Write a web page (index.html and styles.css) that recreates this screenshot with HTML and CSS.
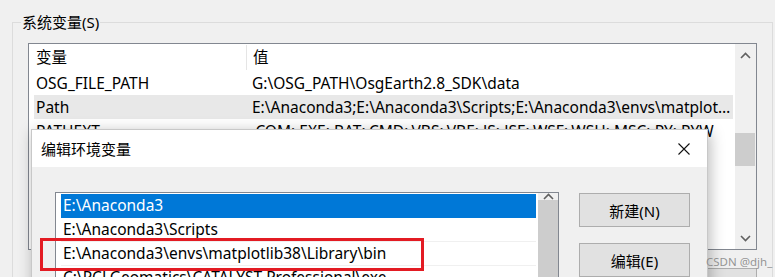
FILE: index.html
```html
<!DOCTYPE html>
<html lang="zh-CN">
<head>
  <meta charset="UTF-8" />
  <title>环境变量</title>
  <link rel="stylesheet" href="styles.css">
</head>
<body>
  <div class="window">
    <fieldset class="group">
      <legend>系统变量(S)</legend>
      <div class="listview">
        <div class="lv-body">
          <div class="lv-header">
            <div class="col col-name">变量</div>
            <div class="col col-value">值</div>
          </div>
          <div class="lv-row">
            <div class="col col-name">OSG_FILE_PATH</div>
            <div class="col col-value">G:\OSG_PATH\OsgEarth2.8_SDK\data</div>
          </div>
          <div class="lv-row hot">
            <div class="col col-name">Path</div>
            <div class="col col-value">E:\Anaconda3;E:\Anaconda3\Scripts;E:\Anaconda3\envs\matplotlib38;E:\Anaconda3\envs\matplotlib38\Library\bin</div>
          </div>
          <div class="lv-row">
            <div class="col col-name">PATHEXT</div>
            <div class="col col-value">.COM;.EXE;.BAT;.CMD;.VBS;.VBE;.JS;.JSE;.WSF;.WSH;.MSC;.PY;.PYW</div>
          </div>
          <div class="lv-row">
            <div class="col col-name">PROCESSOR_ARCHITECTURE</div>
            <div class="col col-value">AMD64</div>
          </div>
        </div>
        <div class="vscroll">
          <div class="arrow"><svg width="11" height="7" viewBox="0 0 11 7"><path d="M1 6 L5.5 1.5 L10 6" fill="none" stroke="#606060" stroke-width="1.6"/></svg></div>
          <div class="track"><div class="thumb outer-thumb"></div></div>
          <div class="arrow"><svg width="11" height="7" viewBox="0 0 11 7"><path d="M1 1 L5.5 5.5 L10 1" fill="none" stroke="#606060" stroke-width="1.6"/></svg></div>
        </div>
      </div>
      <div class="group-buttons">
        <button class="btn">删除(L)</button>
      </div>
    </fieldset>
  </div>

  <div class="dialog">
    <div class="titlebar">
      <span class="title">编辑环境变量</span>
      <span class="close">
        <svg width="12" height="12" viewBox="0 0 12 12"><path d="M0.5 0.5 L11.5 11.5 M11.5 0.5 L0.5 11.5" stroke="#111" stroke-width="1.1"/></svg>
      </span>
    </div>
    <div class="dialog-body">
      <div class="pathlist">
        <div class="pl-rows">
          <div class="pl-row selected">E:\Anaconda3</div>
          <div class="pl-row">E:\Anaconda3\Scripts</div>
          <div class="pl-row">E:\Anaconda3\envs\matplotlib38\Library\bin</div>
          <div class="pl-row">C:\PCLGeomatics\CATALYST Professional\exe</div>
        </div>
        <div class="vscroll small">
          <div class="arrow"><svg width="11" height="7" viewBox="0 0 11 7"><path d="M1 6 L5.5 1.5 L10 6" fill="none" stroke="#606060" stroke-width="1.6"/></svg></div>
          <div class="track"><div class="thumb inner-thumb"></div></div>
        </div>
      </div>
      <div class="side-buttons">
        <button class="btn">新建(N)</button>
        <button class="btn">编辑(E)</button>
      </div>
    </div>
    <div class="mark"></div>
  </div>

  <div class="watermark">CSDN @djh_</div>
</body>
</html>
```

FILE: styles.css
```css
body {
  margin: 0;
  width: 775px;
  height: 277px;
  overflow: hidden;
  position: relative;
  background-color: #f0f0f0;
  color: #000;
  font-family: "Noto Sans", "Noto Sans CJK SC", sans-serif;
  font-size: 15px;
}
.window {
  padding-top: 12px;
}
.group {
  margin: 0 2px 0 12px;
  padding: 0 15px 0 15px;
  border: 1px solid #dcdcdc;
  min-width: 0;
}
.group legend {
  margin-left: -7px;
  padding: 0 1px;
  line-height: 20px;
}
.listview {
  display: flex;
  height: 207px;
  margin-top: 11px;
  border: 1px solid #828790;
  background: #fff;
  box-sizing: border-box;
  font-size: 15.5px;
}
.lv-body {
  flex: 1;
  min-width: 0;
  padding: 0 2px 0 5px;
}
.lv-header, .lv-row {
  display: flex;
  height: 24px;
  line-height: 24px;
  white-space: nowrap;
}
.lv-header {
  height: 27px;
  line-height: 27px;
}
.col-name {
  width: 210px;
  flex: none;
  padding-left: 2px;
  overflow: hidden;
}
.col-value {
  flex: 1;
  min-width: 0;
  padding-left: 6px;
  overflow: hidden;
  text-overflow: ellipsis;
}
.lv-header .col-name {
  border-right: 1px solid #e5e5e5;
  height: 25px;
  margin-top: 1px;
  line-height: 25px;
}
.lv-row.hot {
  background: #e8e8e8;
}
.vscroll {
  width: 21px;
  flex: none;
  display: flex;
  flex-direction: column;
  background: #f0f0f0;
}
.vscroll .arrow {
  height: 22px;
  display: flex;
  align-items: center;
  justify-content: center;
}
.vscroll .track {
  flex: 1;
}
.thumb {
  background: #cdcdcd;
}
.outer-thumb {
  margin: 67px 1px 0 0;
  height: 33px;
}
.inner-thumb {
  height: 200px;
}
.group-buttons {
  display: flex;
  justify-content: flex-end;
  margin-top: 18px;
}
.btn {
  width: 111px;
  height: 34px;
  padding: 0;
  background: #e1e1e1;
  border: 1px solid #adadad;
  border-radius: 0;
  font-family: inherit;
  font-size: 15px;
  color: #000;
}

/* overlay dialog */
.dialog {
  position: absolute;
  left: 31px;
  top: 129px;
  width: 677px;
  height: 220px;
  background: #f0f0f0;
  border: 1px solid #c8c8c8;
  box-sizing: border-box;
  box-shadow: 2px 3px 14px rgba(0, 0, 0, 0.28);
}
.titlebar {
  display: flex;
  align-items: center;
  justify-content: space-between;
  height: 37px;
  background: #fff;
}
.title {
  padding-left: 9px;
}
.close {
  width: 46px;
  height: 37px;
  display: flex;
  align-items: center;
  justify-content: center;
}
.dialog-body {
  display: flex;
  padding: 25px 0 0 23px;
}
.pathlist {
  display: flex;
  width: 504px;
  height: 160px;
  border: 1px solid #828790;
  background: #fff;
  box-sizing: border-box;
  font-size: 15.5px;
}
.pl-rows {
  flex: 1;
  min-width: 0;
  padding: 1px 2px 0 5px;
}
.pl-row {
  height: 23px;
  line-height: 23px;
  padding-left: 2px;
  border-bottom: 1px solid #f0f0f0;
  white-space: nowrap;
  overflow: hidden;
}
.pl-row.selected {
  background: #0078d7;
  border-bottom-color: #0078d7;
  color: #fff;
}
.vscroll.small {
  width: 20px;
}
.side-buttons {
  display: flex;
  flex-direction: column;
  gap: 16px;
  margin: 1px 0 0 20px;
}
.mark {
  position: absolute;
  left: 8px;
  top: 108px;
  width: 384px;
  height: 33px;
  border: 3px solid #e31b23;
  box-sizing: border-box;
}
.watermark {
  position: absolute;
  left: 706px;
  top: 254px;
  font-size: 11.5px;
  color: rgba(130, 130, 130, 0.85);
  white-space: nowrap;
}
```
